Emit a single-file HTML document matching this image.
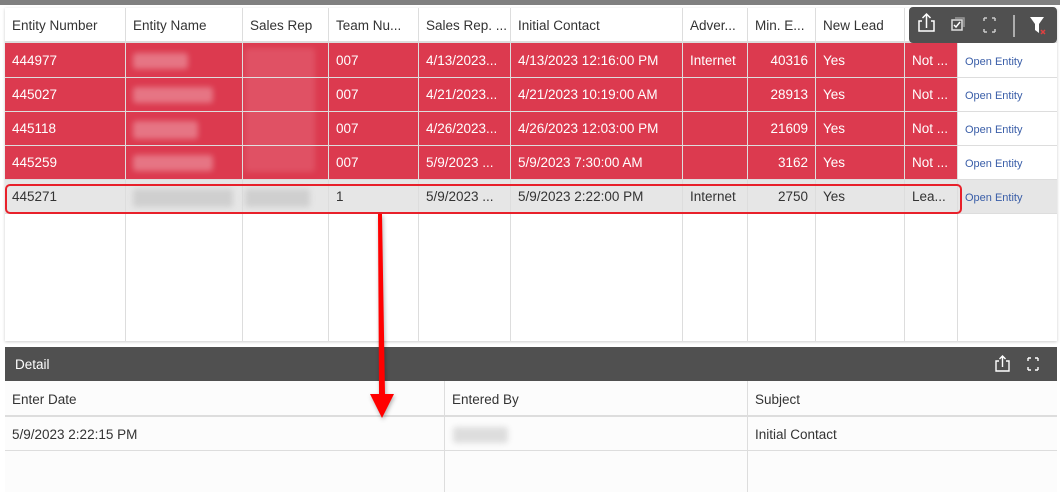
<!DOCTYPE html>
<html><head><meta charset="utf-8"><style>
*{box-sizing:border-box;margin:0;padding:0}
body{width:1060px;height:492px;background:#fff;font-family:"Liberation Sans",sans-serif;font-size:13.5px;color:#333;position:relative;overflow:hidden}
.top{position:absolute;left:0;top:0;width:1060px;height:5px;background:#808080}
.grid{position:absolute;left:5px;top:8px;width:1052px;height:333px;background:#fff;box-shadow:0 1px 3px rgba(0,0,0,.2)}
.c{position:absolute;white-space:nowrap;overflow:hidden;padding:0 7px;line-height:36px}
.vl{position:absolute;width:1px;background:#ddd}
.hl{position:absolute;height:1px;background:#ddd}
.red{position:absolute;background:#dc3a4f}
.w{color:#fff}
.link{color:#3a5ea8;font-size:11px}
.blur{position:absolute;filter:blur(3px);background:rgba(255,255,255,.3);border-radius:3px}
.det{position:absolute;left:5px;top:347px;width:1052px;height:145px;background:#fcfcfc}
.dh{position:absolute;left:0;top:0;width:1052px;height:34px;background:#505050;color:#fff;line-height:36px;padding-left:10px;font-size:13.5px}
</style></head><body>
<div class="top"></div>
<div class="grid">
<div class="red" style="left:0;top:35px;width:952px;height:136px"></div>
<div style="position:absolute;left:0;top:171px;width:1052px;height:34px;background:#e6e6e6"></div>
<div class="vl" style="left:120px;top:0;height:333px"></div>
<div class="vl" style="left:237px;top:0;height:333px"></div>
<div class="vl" style="left:323px;top:0;height:333px"></div>
<div class="vl" style="left:413px;top:0;height:333px"></div>
<div class="vl" style="left:505px;top:0;height:333px"></div>
<div class="vl" style="left:677px;top:0;height:333px"></div>
<div class="vl" style="left:742px;top:0;height:333px"></div>
<div class="vl" style="left:810px;top:0;height:333px"></div>
<div class="vl" style="left:899px;top:0;height:333px"></div>
<div class="vl" style="left:952px;top:0;height:333px"></div>
<div class="hl" style="left:0;top:33px;width:1052px;height:2px"></div>
<div class="hl" style="left:0;top:69px;width:1052px"></div>
<div class="hl" style="left:0;top:103px;width:1052px"></div>
<div class="hl" style="left:0;top:137px;width:1052px"></div>
<div class="hl" style="left:0;top:171px;width:1052px"></div>
<div class="hl" style="left:0;top:205px;width:1052px"></div>
<div class="c" style="left:0;top:0;width:120px">Entity Number</div>
<div class="c" style="left:121px;top:0;width:116px">Entity Name</div>
<div class="c" style="left:238px;top:0;width:85px">Sales Rep</div>
<div class="c" style="left:324px;top:0;width:89px">Team Nu...</div>
<div class="c" style="left:414px;top:0;width:91px">Sales Rep. ...</div>
<div class="c" style="left:506px;top:0;width:171px">Initial Contact</div>
<div class="c" style="left:678px;top:0;width:64px">Adver...</div>
<div class="c" style="left:743px;top:0;width:67px">Min. E...</div>
<div class="c" style="left:811px;top:0;width:88px">New Lead</div>
<div class="w">
<div class="c" style="left:0;top:35px">444977</div><div class="c" style="left:324px;top:35px">007</div><div class="c" style="left:414px;top:35px">4/13/2023...</div><div class="c" style="left:506px;top:35px">4/13/2023 12:16:00 PM</div><div class="c" style="left:678px;top:35px">Internet</div><div class="c" style="left:743px;top:35px;width:67px;text-align:right">40316</div><div class="c" style="left:811px;top:35px">Yes</div><div class="c" style="left:900px;top:35px">Not ...</div>
<div class="c" style="left:0;top:69px">445027</div><div class="c" style="left:324px;top:69px">007</div><div class="c" style="left:414px;top:69px">4/21/2023...</div><div class="c" style="left:506px;top:69px">4/21/2023 10:19:00 AM</div><div class="c" style="left:743px;top:69px;width:67px;text-align:right">28913</div><div class="c" style="left:811px;top:69px">Yes</div><div class="c" style="left:900px;top:69px">Not ...</div>
<div class="c" style="left:0;top:103px">445118</div><div class="c" style="left:324px;top:103px">007</div><div class="c" style="left:414px;top:103px">4/26/2023...</div><div class="c" style="left:506px;top:103px">4/26/2023 12:03:00 PM</div><div class="c" style="left:743px;top:103px;width:67px;text-align:right">21609</div><div class="c" style="left:811px;top:103px">Yes</div><div class="c" style="left:900px;top:103px">Not ...</div>
<div class="c" style="left:0;top:137px">445259</div><div class="c" style="left:324px;top:137px">007</div><div class="c" style="left:414px;top:137px">5/9/2023 ...</div><div class="c" style="left:506px;top:137px">5/9/2023 7:30:00 AM</div><div class="c" style="left:743px;top:137px;width:67px;text-align:right">3162</div><div class="c" style="left:811px;top:137px">Yes</div><div class="c" style="left:900px;top:137px">Not ...</div>
</div>
<div class="c" style="left:0;top:171px">445271</div><div class="c" style="left:324px;top:171px">1</div><div class="c" style="left:414px;top:171px">5/9/2023 ...</div><div class="c" style="left:506px;top:171px">5/9/2023 2:22:00 PM</div><div class="c" style="left:678px;top:171px">Internet</div><div class="c" style="left:743px;top:171px;width:67px;text-align:right">2750</div><div class="c" style="left:811px;top:171px">Yes</div><div class="c" style="left:900px;top:171px">Lea...</div>
<div class="c link" style="left:953px;top:36px">Open Entity</div>
<div class="c link" style="left:953px;top:70px">Open Entity</div>
<div class="c link" style="left:953px;top:104px">Open Entity</div>
<div class="c link" style="left:953px;top:138px">Open Entity</div>
<div class="c link" style="left:953px;top:172px">Open Entity</div>
<div class="blur" style="left:128px;top:45px;width:55px;height:16px"></div>
<div class="blur" style="left:128px;top:79px;width:80px;height:16px"></div>
<div class="blur" style="left:128px;top:113px;width:65px;height:18px"></div>
<div class="blur" style="left:128px;top:147px;width:80px;height:16px"></div>
<div class="blur" style="left:240px;top:40px;width:70px;height:124px;background:rgba(255,255,255,.12)"></div>
<div class="blur" style="left:128px;top:181px;width:100px;height:18px;background:#cfcfcf"></div>
<div class="blur" style="left:240px;top:181px;width:65px;height:18px;background:#cfcfcf"></div>
</div>
<div style="position:absolute;left:5px;top:184px;width:957px;height:30px;border:2px solid #e8202a;border-radius:5px"></div>
<div style="position:absolute;left:909px;top:7px;width:148px;height:36px;background:#505050;border-radius:4px"></div>
<svg style="position:absolute;left:909px;top:7px" width="148" height="36" fill="none" stroke="#fff" stroke-width="1.5">
<path d="M13 14h-3v10h15V14h-3M17.5 21V7M13.5 11l4-4 4 4"/>
<rect x="43" y="13" width="10" height="10" stroke="#ddd"/><path d="M46 11h9v9" stroke="#999"/><path d="M45 18l2 2 4-5"/>
<path d="M75 11h3M75 11v3M86 11h-3M86 11v3M75 25h3M75 25v-3M86 25h-3M86 25v-3" stroke="#ccc"/>
<path d="M105 8v22" stroke="#ccc"/>
<path d="M121 10h14l-5 7v9l-4-3v-6z" fill="#fff" stroke="none"/>
<path d="M132 23l4 4M136 23l-4 4" stroke="#e04040"/>
</svg>
<div class="det">
<div class="dh">Detail</div>
<svg style="position:absolute;left:985px;top:6px" width="62" height="22" fill="none" stroke="#fff" stroke-width="1.4">
<path d="M9 8H6v10h13V8h-3M12.5 14V3M9.5 6l3-3 3 3"/>
<path d="M38 5h3M38 5v3M48 5h-3M48 5v3M38 17h3M38 17v-3M48 17h-3M48 17v-3"/>
</svg>
<div class="vl" style="left:439px;top:34px;height:111px"></div>
<div class="vl" style="left:742px;top:34px;height:111px"></div>
<div class="hl" style="left:0;top:68px;width:1052px;height:2px"></div>
<div class="hl" style="left:0;top:103px;width:1052px"></div>
<div class="c" style="left:0;top:35px">Enter Date</div>
<div class="c" style="left:440px;top:35px">Entered By</div>
<div class="c" style="left:743px;top:35px">Subject</div>
<div class="c" style="left:0;top:70px">5/9/2023 2:22:15 PM</div>
<div class="blur" style="left:448px;top:80px;width:55px;height:16px;background:#ddd"></div>
<div class="c" style="left:743px;top:70px">Initial Contact</div>
</div>
<svg style="position:absolute;left:360px;top:210px" width="45" height="215">
<path d="M18 4L22 4L25 184L34 184L22 208L10 184L19 184Z" fill="#f00" style="filter:drop-shadow(1px 2px 2px rgba(0,0,0,.3))"/>
</svg>
</body></html>
